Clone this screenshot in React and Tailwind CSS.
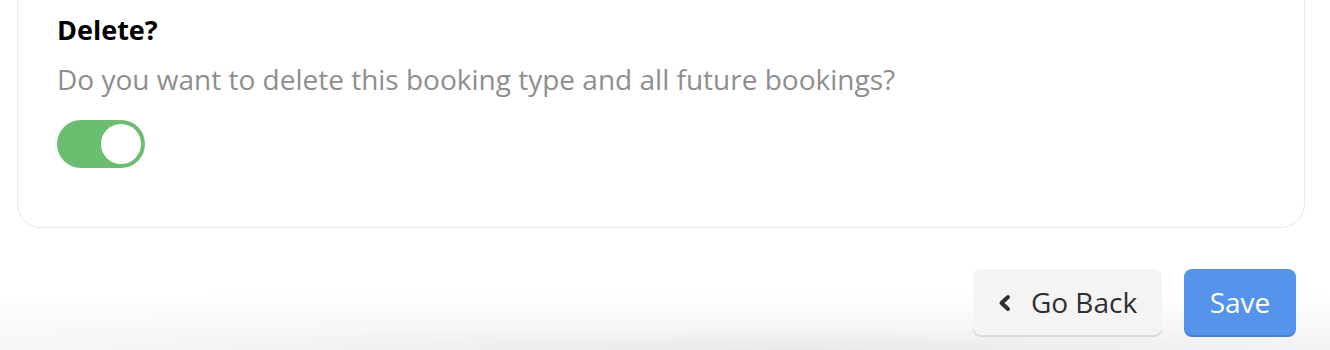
import React from "react";

export default function App() {
  return (
    <div className="relative w-[1330px] h-[350px] overflow-hidden bg-white font-['Open_Sans',sans-serif]">
      <div className="mt-[-40px] ml-[17px] mr-[25px] rounded-b-[24px] border border-t-0 border-[#e7eaf0] bg-white pl-[39px] pt-[52px] pb-[59px]">
        <h2 className="text-[27px] leading-[36px] font-bold text-black">Delete?</h2>
        <p className="mt-[12px] text-[28px] leading-[38px] text-[#8e8e8e]">
          Do you want to delete this booking type and all future bookings?
        </p>
        <button
          type="button"
          className="mt-[22px] flex h-[48px] w-[88px] items-center justify-end rounded-full bg-[#6bbd70] p-[4px]"
        >
          <span className="block h-[40px] w-[40px] rounded-full bg-white" />
        </button>
      </div>
      <div className="relative z-10 mt-[41px] flex justify-end gap-[22px] pr-[34px]">
        <button
          type="button"
          className="flex h-[66px] w-[189px] items-center justify-center gap-[20px] rounded-[8px] bg-[#f4f4f4] text-[28px] text-[#2f2f2f] shadow-[0_2px_0_#d9d9d9]"
        >
          <svg width="13" height="18" viewBox="0 0 13 18" className="mt-[1px]">
            <path d="M10 3 L3.5 9 L10 15" fill="none" stroke="#2f2f2f" strokeWidth="4" strokeLinecap="round" strokeLinejoin="round" />
          </svg>
          <span>Go Back</span>
        </button>
        <button
          type="button"
          className="flex h-[66px] w-[112px] items-center justify-center rounded-[8px] bg-[#5594ea] text-[28px] text-white shadow-[0_2px_0_#4a7fcb]"
        >
          Save
        </button>
      </div>
      <div className="pointer-events-none absolute bottom-0 left-0 right-0 h-[60px] bg-[radial-gradient(140%_100%_at_60%_100%,#e9e9e9_0%,rgba(244,244,244,0.75)_40%,rgba(255,255,255,0)_100%)]" />
    </div>
  );
}
